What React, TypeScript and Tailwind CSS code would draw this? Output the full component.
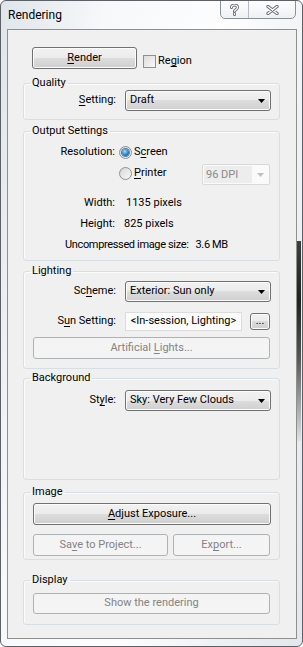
import type { ReactNode } from 'react'

const btn =
  'flex items-center justify-center border border-[#707070] rounded-[3px] bg-[linear-gradient(#f2f2f2,#ebebeb_50%,#dddddd_50%,#cfcfcf)] shadow-[inset_0_0_0_1px_#fcfcfc] text-black'
const btnOff =
  'flex items-center justify-center border border-[#adb2b5] rounded-[3px] bg-[#f4f4f4] text-[#838383]'

function U({ children }: { children: ReactNode }) {
  return <span className="underline underline-offset-[2px]">{children}</span>
}

function Arrow({ color = '#000' }: { color?: string }) {
  return (
    <svg width="7" height="4" viewBox="0 0 7 4">
      <path d="M0 0H7L3.5 4Z" fill={color} />
    </svg>
  )
}

function Combo({ children, className = '' }: { children: ReactNode; className?: string }) {
  return (
    <div className={`h-[21px] flex items-center pl-[4px] pr-[5px] border border-[#707070] rounded-[3px] bg-[linear-gradient(#f2f2f2,#ebebeb_50%,#dddddd_50%,#cfcfcf)] shadow-[inset_0_0_0_1px_#fcfcfc] ${className}`}>
      <span className="flex-1 text-left">{children}</span>
      <Arrow />
    </div>
  )
}

function Radio({ checked }: { checked?: boolean }) {
  return (
    <div className="w-[13px] h-[13px] rounded-full border border-[#8e8f8f] bg-[linear-gradient(135deg,#d8d8d8,#f8f8f8)] flex items-center justify-center">
      {checked && (
        <div className="w-[7px] h-[7px] rounded-full bg-[radial-gradient(circle_at_40%_35%,#a9dcf6,#2a80c6_55%,#0d4a8c)] shadow-[0_0_0_1px_#4a7fb0]" />
      )}
    </div>
  )
}

function Group({ title, className = '', children }: { title: string; className?: string; children: ReactNode }) {
  return (
    <fieldset className={`ml-[15px] w-[257px] border border-[#d5dfe5] rounded-[3px] shadow-[inset_1px_1px_0_#fbfbfb] ${className}`}>
      <legend className="ml-[6px] px-[2px] leading-[14px]">{title}</legend>
      {children}
    </fieldset>
  )
}

function Row({ label, children, className = '' }: { label: ReactNode; children: ReactNode; className?: string }) {
  return (
    <div className={`flex items-center ${className}`}>
      <div className="w-[92px] text-right">{label}</div>
      <div className="ml-[9px] flex items-center">{children}</div>
    </div>
  )
}

function CaptionButtons() {
  return (
    <div className="absolute left-[219px] -top-[1px] flex h-[19px] border border-[#8b9097] rounded-b-[5px] bg-[linear-gradient(#fdfdfd,#eef1f4)] overflow-hidden">
      <div className="w-[28px] flex items-center justify-center border-r border-[#b7bcc2]">
        <svg width="9" height="12" viewBox="0 0 9 12">
          <path d="M1.5 3.5C1.5 1.5 3 1 4.5 1S7.5 1.8 7.5 3.5 5 5.5 4.5 7.2M4.5 9.5V10.5" fill="none" stroke="#6b6f74" strokeWidth="3" strokeLinecap="round" />
          <path d="M1.5 3.5C1.5 1.5 3 1 4.5 1S7.5 1.8 7.5 3.5 5 5.5 4.5 7.2M4.5 9.5V10.5" fill="none" stroke="#fff" strokeWidth="1.2" strokeLinecap="round" />
        </svg>
      </div>
      <div className="w-[46px] flex items-center justify-center">
        <svg width="13" height="10" viewBox="0 0 13 10">
          <path d="M2 1.5L11 8.5M11 1.5L2 8.5" stroke="#6b6f74" strokeWidth="3.4" strokeLinecap="round" />
          <path d="M2 1.5L11 8.5M11 1.5L2 8.5" stroke="#fff" strokeWidth="1.4" strokeLinecap="round" />
        </svg>
      </div>
    </div>
  )
}

export default function App() {
  return (
    <div className="w-[303px] h-[647px] relative border border-[#5d6167] rounded-[6px] bg-[linear-gradient(100deg,#dfe5eb,#f6f8fa_25%,#fdfdfe_55%,#eef1f4_80%,#e3e8ed)] font-['Roboto',sans-serif] text-[11px] text-black overflow-hidden">
      <CaptionButtons />
      <div className="absolute left-[295px] top-[240px] w-[5px] h-[200px] bg-[linear-gradient(#3a3f3a,#1c221e_30%,#5a5a58_60%,#dfe3e6)]" />
      <div className="h-[28px] pl-[7px] pt-[6px] leading-[16px] text-[12px]">Rendering</div>
      <div className="ml-[6px] w-[290px] h-[610px] border border-[#8e8f8f] bg-[#f0f0f0] relative">
        <div className="flex items-start mt-[17px] ml-[24px] h-[22px]">
          <div className={`${btn} w-[105px] h-[22px]`}>
            <span>
              <U>R</U>ender
            </span>
          </div>
          <div className="ml-[6px] mt-[8px] flex items-center h-[13px]">
            <div className="w-[13px] h-[13px] border border-[#8e8f8f] bg-[linear-gradient(135deg,#dcdcdc,#f8f8f8)]" />
            <span className="ml-[2px]">
              Re<U>g</U>ion
            </span>
          </div>
        </div>

        <Group title="Quality" className="mt-[7px] pb-[8px]">
          <Row label={<><U>S</U>etting:</>}>
            <Combo className="w-[146px]">Draft</Combo>
          </Row>
        </Group>

        <Group title="Output Settings" className="mt-[4px] pb-[4px]">
          <div className="flex items-center h-[20px] mt-[4px]">
            <div className="w-[91px] text-right">Resolution:</div>
            <div className="ml-[4px]"><Radio checked /></div>
            <span className="ml-[2px]">S<U>c</U>reen</span>
          </div>
          <div className="flex items-center h-[21px] mt-[1px]">
            <div className="w-[91px]" />
            <div className="ml-[4px]"><Radio /></div>
            <span className="ml-[2px] w-[68px]"><U>P</U>rinter</span>
            <div className="w-[68px] h-[21px] mt-[2px] flex items-center border border-[#d9d9d9] rounded-[2px] bg-[#fafafa] text-[#8a8a8a]">
              <span className="ml-[1px] h-[17px] w-[48px] bg-[#ededed] pl-[2px] leading-[17px]">96 DPI</span>
              <div className="ml-auto mr-[5px] opacity-60"><Arrow color="#9a9a9a" /></div>
            </div>
          </div>
          <div className="flex items-center h-[21px] mt-[9px]">
            <div className="w-[91px] text-right">Width:</div>
            <span className="ml-[11px]">1135 pixels</span>
          </div>
          <div className="flex items-center h-[21px]">
            <div className="w-[91px] text-right">Height:</div>
            <span className="ml-[9px]">825 pixels</span>
          </div>
          <div className="flex items-center h-[21px] pl-[41px] tracking-[-0.35px]">
            <span>Uncompressed image size:</span>
            <span className="ml-[7px]">3.6 MB</span>
          </div>
        </Group>

        <Group title="Lighting" className="mt-[3px] pb-[9px]">
          <Row label={<>Sc<U>h</U>eme:</>} className="mt-[3px]">
            <Combo className="w-[146px]">Exterior: Sun only</Combo>
          </Row>
          <Row label={<>S<U>u</U>n Setting:</>} className="mt-[10px]">
            <div className="w-[117px] h-[19px] border border-[#dcdcdc] bg-[#fbfbfb] flex items-center justify-center">
              <span>&lt;In-session, Lighting&gt;</span>
            </div>
            <div className={`${btn} ml-[8px] w-[20px] h-[17px] leading-[10px] items-end pb-[3px] text-[11px]`}>
              <span>...</span>
            </div>
          </Row>
          <div className={`${btnOff} ml-[9px] mt-[6px] w-[237px] h-[22px]`}>
            <span>
              Artificial <U>L</U>ights...
            </span>
          </div>
        </Group>

        <Group title="Background" className="mt-[2px] pb-[68px]">
          <Row label={<>St<U>y</U>le:</>} className="mt-[5px]">
            <Combo className="w-[146px]">Sky: Very Few Clouds</Combo>
          </Row>
        </Group>

        <Group title="Image" className="mt-[5px] pb-[3px]">
          <div className={`${btn} ml-[9px] mt-[4px] w-[238px] h-[22px]`}>
            <span>
              <U>A</U>djust Exposure...
            </span>
          </div>
          <div className="flex ml-[9px] mt-[9px] gap-[5px]">
            <div className={`${btnOff} w-[135px] h-[22px]`}>
              <span>
                Sa<U>v</U>e to Project...
              </span>
            </div>
            <div className={`${btnOff} w-[97px] h-[22px]`}>
              <span>
                Ex<U>p</U>ort...
              </span>
            </div>
          </div>
        </Group>

        <Group title="Display" className="mt-[13px] pb-[10px]">
          <div className={`${btnOff} ml-[9px] mt-[6px] w-[237px] h-[21px]`}>
            <span>Show the rendering</span>
          </div>
        </Group>
      </div>
    </div>
  )
}
